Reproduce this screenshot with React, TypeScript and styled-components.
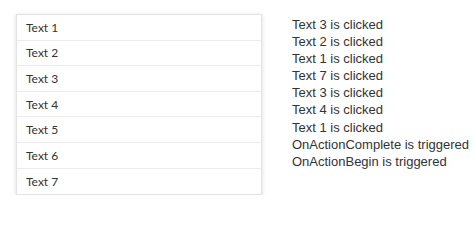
import styled, { createGlobalStyle } from "styled-components";

const GlobalStyle = createGlobalStyle`
  html, body {
    margin: 0;
    padding: 0;
    background: #ffffff;
  }
`;

const Page = styled.div`
  display: flex;
  align-items: flex-start;
  gap: 30px;
  padding: 14px 0 0 16px;
`;

const ListBox = styled.ul`
  width: 246px;
  margin: 0;
  padding: 0;
  list-style: none;
  border: 1px solid #e3e3e3;
  box-sizing: border-box;
  background: #ffffff;
  box-shadow: 0 1px 4px rgba(0, 0, 0, 0.16);
`;

const ListItem = styled.li`
  height: 25.6px;
  display: flex;
  align-items: center;
  padding: 0 9px;
  box-sizing: border-box;
  font-family: Lato, "Open Sans", sans-serif;
  font-size: 12px;
  color: #333333;
  border-bottom: 1px solid #ebebeb;

  &:last-child {
    border-bottom: none;
  }
`;

const EventLog = styled.div`
  display: flex;
  flex-direction: column;
  margin-top: 2px;
  font-family: "Liberation Sans", Arial, sans-serif;
  font-size: 13px;
  line-height: 17.1px;
  color: #333333;
`;

const items = ["Text 1", "Text 2", "Text 3", "Text 4", "Text 5", "Text 6", "Text 7"];

const events = [
  "Text 3 is clicked",
  "Text 2 is clicked",
  "Text 1 is clicked",
  "Text 7 is clicked",
  "Text 3 is clicked",
  "Text 4 is clicked",
  "Text 1 is clicked",
  "OnActionComplete is triggered",
  "OnActionBegin is triggered",
];

export default function App() {
  return (
    <>
      <GlobalStyle />
      <Page>
        <ListBox>
          {items.map((t) => (
            <ListItem key={t}>{t}</ListItem>
          ))}
        </ListBox>
        <EventLog>
          {events.map((e, i) => (
            <span key={i}>{e}</span>
          ))}
        </EventLog>
      </Page>
    </>
  );
}
